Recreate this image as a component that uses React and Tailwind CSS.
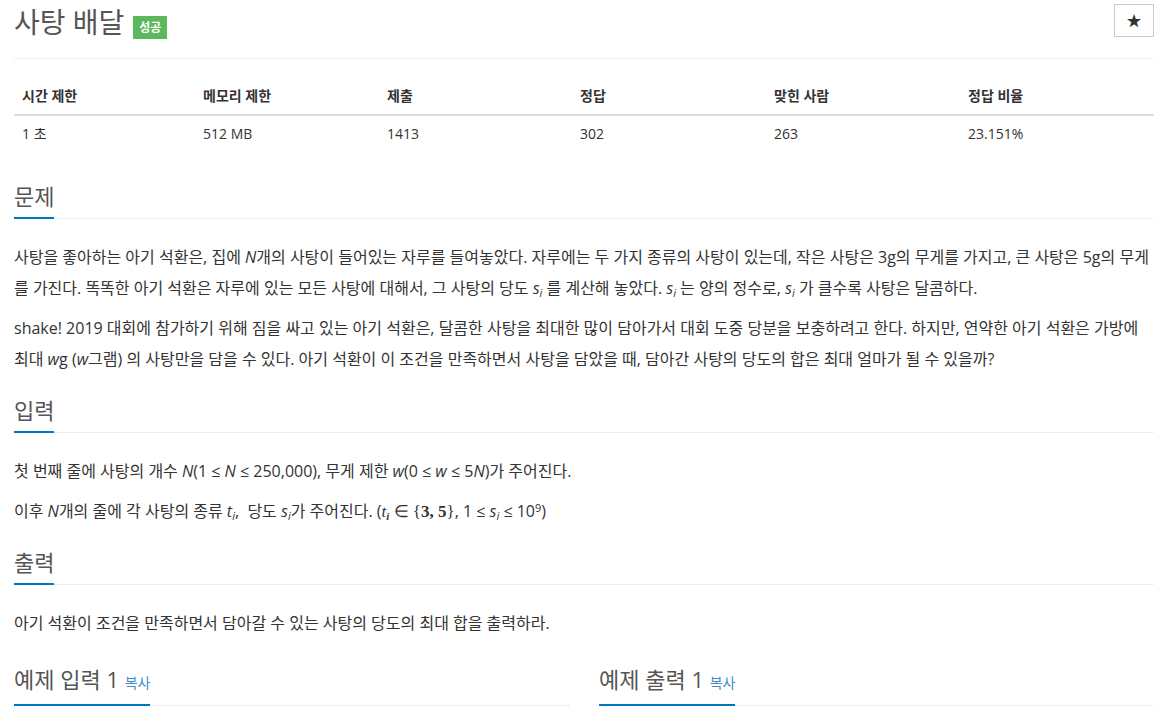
import React from "react";

const headers = ["시간 제한", "메모리 제한", "제출", "정답", "맞힌 사람", "정답 비율"];
const values = ["1 초", "512 MB", "1413", "302", "263", "23.151%"];

const Headline = ({ children, className = "" }) => (
  <div className={`border-b border-dotted border-[#ddd] ${className}`}>
    <h2 className="inline-block text-[22px] leading-[30px] pb-[6px] border-b-2 border-[#0076c0] -mb-px text-[#555]">
      {children}
    </h2>
  </div>
);

const Var = ({ children, sub }) => (
  <span className="italic">
    {children}
    {sub && <sub className="text-[11px] italic">{sub}</sub>}
  </span>
);

const App = () => {
  return (
    <div className="min-h-screen bg-white text-[#333] font-['Open_Sans','Noto_Sans_CJK_KR',sans-serif]">
      <div className="w-[1140px] ml-[14px]">
        <div className="flex justify-between items-start border-b border-[#eee] h-[59px]">
          <h1 className="flex items-center text-[28px] leading-[42px] text-[#555] pt-px">
            사탕 배달
            <span className="ml-[9px] mt-[10px] bg-[#5cb85c] text-white text-[12px] font-bold leading-[23px] px-[6px]">
              성공
            </span>
          </h1>
          <button className="mt-1 w-[40px] h-[33px] border border-[#ccc] bg-white text-[#333] text-[15px] flex items-center justify-center">
            ★
          </button>
        </div>

        <div className="mt-[19px] text-[14px]">
          <div className="grid grid-cols-[181px_184px_193px_194px_194px_1fr] border-b-2 border-[#ddd]">
            {headers.map((h) => (
              <div key={h} className="px-2 py-2 leading-5 font-bold">
                {h}
              </div>
            ))}
          </div>
          <div className="grid grid-cols-[181px_184px_193px_194px_194px_1fr]">
            {values.map((v) => (
              <div key={v} className="px-2 py-2 leading-5">
                {v}
              </div>
            ))}
          </div>
        </div>

        <section className="mt-[29px]">
          <Headline>문제</Headline>
          <div className="mt-[23px] text-[16px] leading-[31px]">
            <p className="mb-[9px]">
              사탕을 좋아하는 아기 석환은, 집에 <Var>N</Var>개의 사탕이 들어있는 자루를 들여놓았다. 자루에는 두 가지 종류의 사탕이 있는데, 작은 사탕은 3g의 무게를 가지고, 큰 사탕은 5g의 무게를 가진다. 똑똑한 아기 석환은 자루에 있는 모든 사탕에 대해서, 그 사탕의 당도 <Var sub="i">s</Var> 를 계산해 놓았다. <Var sub="i">s</Var> 는 양의 정수로, <Var sub="i">s</Var> 가 클수록 사탕은 달콤하다.
            </p>
            <p className="mb-[9px]">
              shake! 2019 대회에 참가하기 위해 짐을 싸고 있는 아기 석환은, 달콤한 사탕을 최대한 많이 담아가서 대회 도중 당분을 보충하려고 한다. 하지만, 연약한 아기 석환은 가방에 최대 <Var>w</Var>g (<Var>w</Var>그램) 의 사탕만을 담을 수 있다. 아기 석환이 이 조건을 만족하면서 사탕을 담았을 때, 담아간 사탕의 당도의 합은 최대 얼마가 될 수 있을까?
            </p>
          </div>
        </section>

        <section className="mt-[20px]">
          <Headline>입력</Headline>
          <div className="mt-[23px] text-[16px] leading-[31px]">
            <p className="mb-[9px]">
              첫 번째 줄에 사탕의 개수 <Var>N</Var>(1 ≤ <Var>N</Var> ≤ 250,000), 무게 제한 <Var>w</Var>(0 ≤ <Var>w</Var> ≤ 5<Var>N</Var>)가 주어진다.
            </p>
            <p className="mb-[9px]">
              이후 <Var>N</Var>개의 줄에 각 사탕의 종류 <Var sub="i">t</Var>,&nbsp; 당도 <Var sub="i">s</Var>가 주어진다. (
              <span className="font-['Liberation_Serif',serif] text-[17px]">
                <span className="italic">t</span>
                <sub className="text-[11px] italic font-bold">i</sub> ∈ {"{"}
                <span className="font-bold">3, 5</span>
                {"}"}
              </span>
              , 1 ≤ <Var sub="i">s</Var> ≤ 10<sup className="text-[11px]">9</sup>)
            </p>
          </div>
        </section>

        <section className="mt-[20px]">
          <Headline>출력</Headline>
          <div className="mt-[23px] text-[16px] leading-[31px]">
            <p className="mb-[9px]">아기 석환이 조건을 만족하면서 담아갈 수 있는 사탕의 당도의 최대 합을 출력하라.</p>
          </div>
        </section>

        <div className="mt-[25px] grid grid-cols-[555px_555px] gap-x-[30px]">
          <Headline>
            예제 입력 1 <a className="text-[14px] text-[#428bca]">복사</a>
          </Headline>
          <Headline>
            예제 출력 1 <a className="text-[14px] text-[#428bca]">복사</a>
          </Headline>
        </div>
      </div>
    </div>
  );
};

export default App;
